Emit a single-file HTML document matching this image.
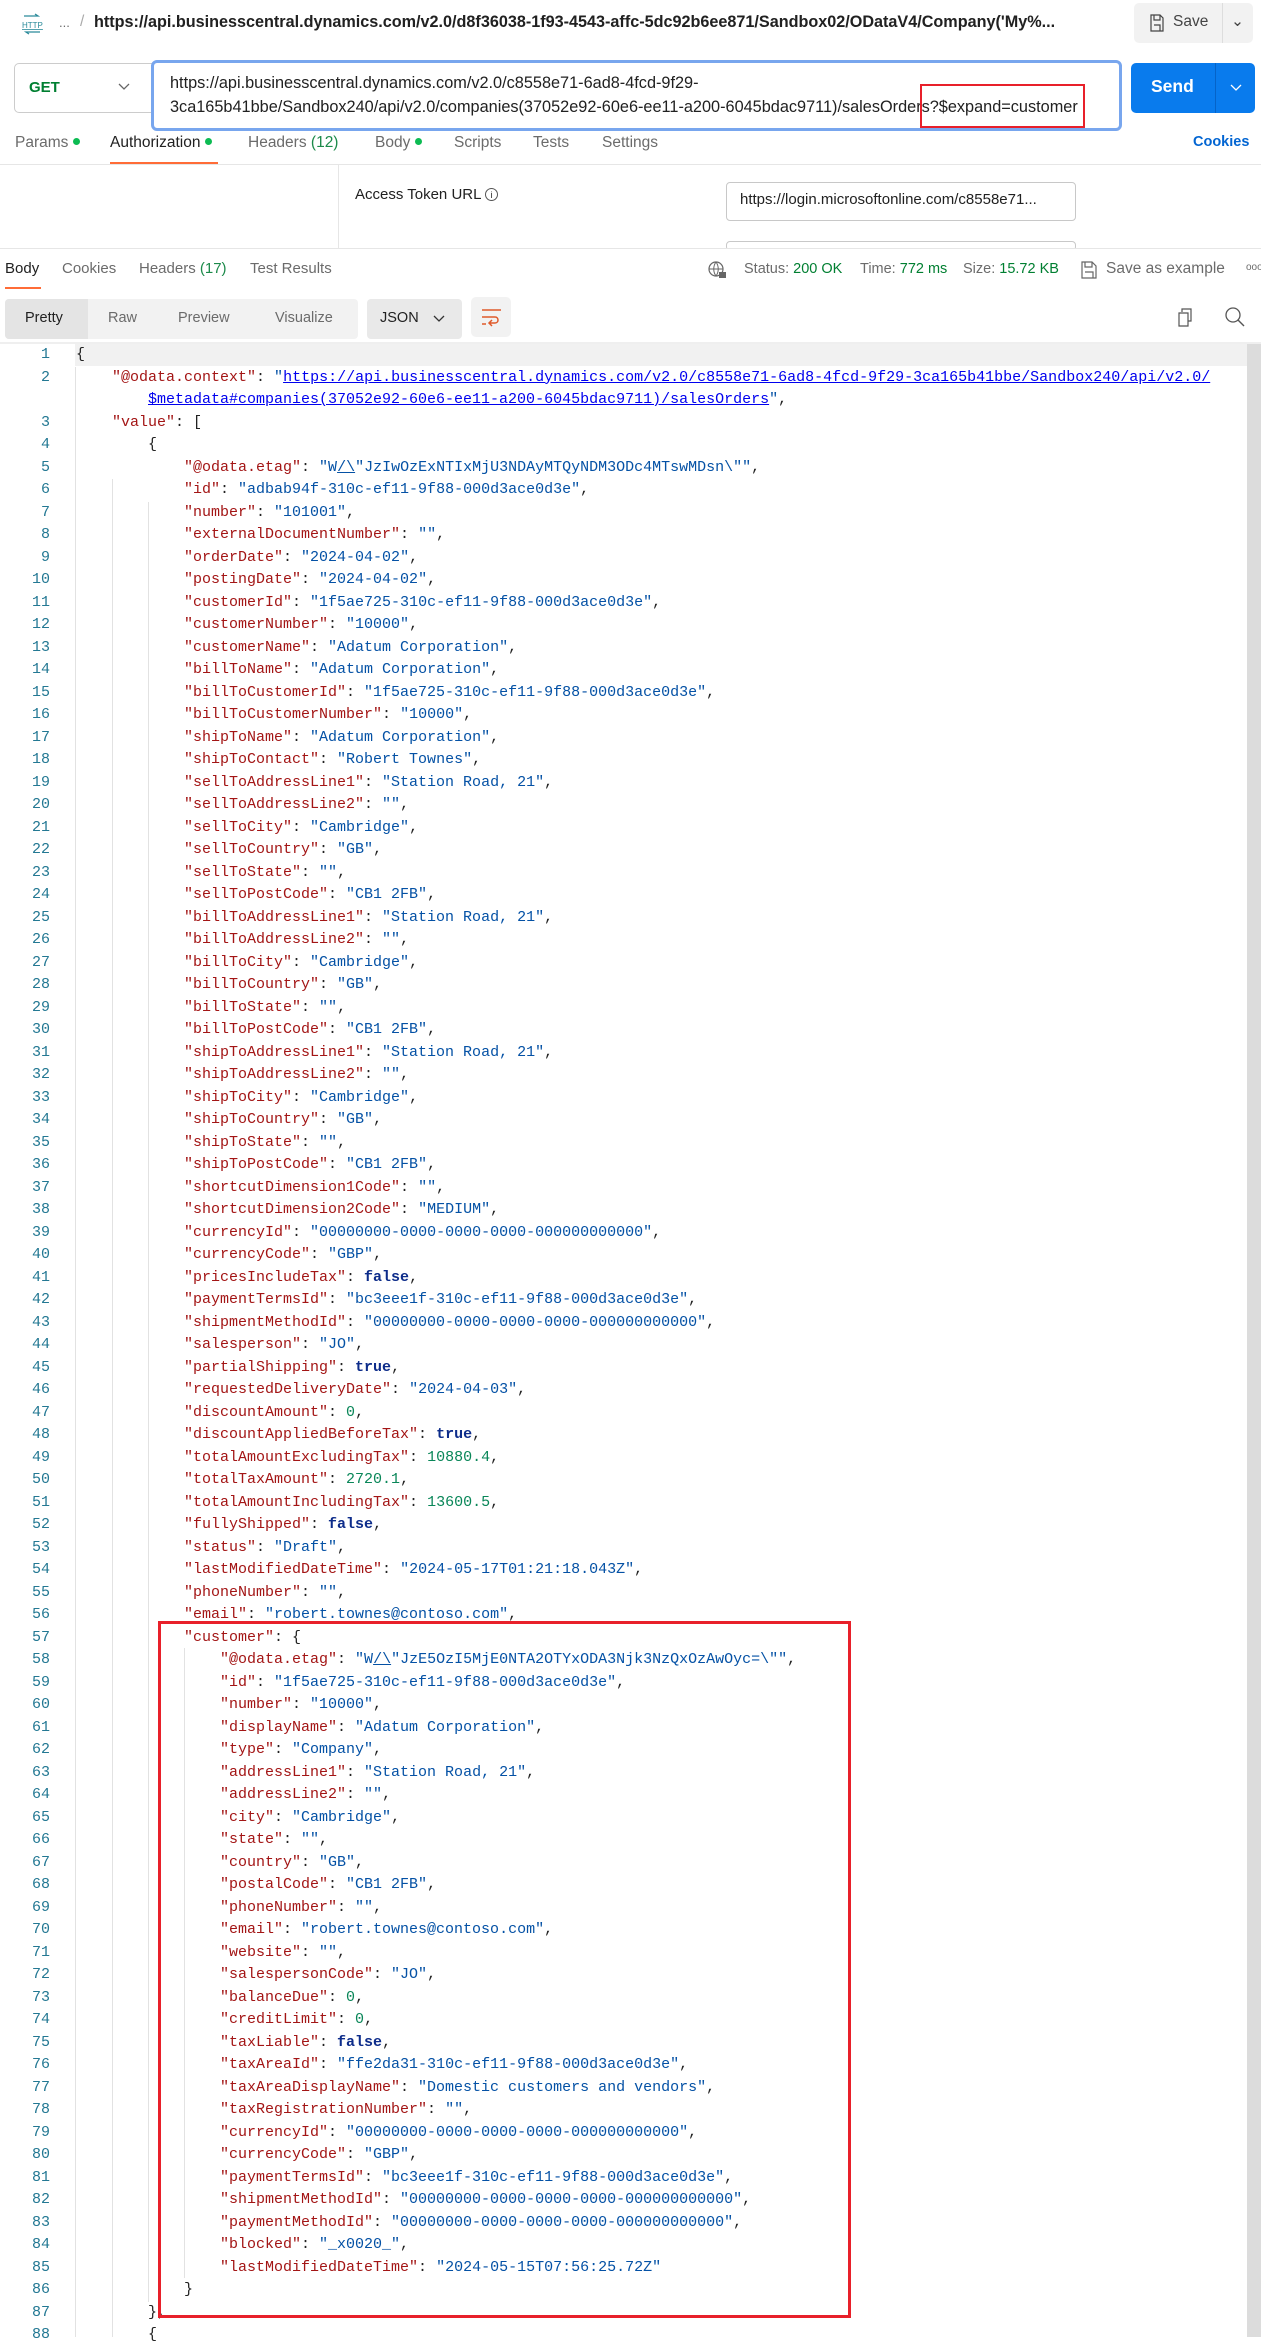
<!DOCTYPE html>
<html><head><meta charset="utf-8"><style>
*{margin:0;padding:0;box-sizing:border-box}
body{width:1261px;height:2337px;background:#fff;position:relative;overflow:hidden;font-family:"Liberation Sans",sans-serif;color:#212121}
.a{position:absolute}
.t{font-size:15.5px;white-space:nowrap}
.g{color:#6b6b6b}
.dot{display:inline-block;width:7px;height:7px;border-radius:50%;background:#0cbb52;margin-left:5px;vertical-align:2px}
#code{position:absolute;left:0;top:344px;width:1247px;font-family:"Liberation Mono",monospace;font-size:15px}
#code div{height:22.5px;line-height:22.5px;white-space:pre;position:relative;color:#222}
#code div i{position:absolute;left:0;width:50px;text-align:right;font-style:normal;color:#237893}
.c0{padding-left:76px}.c1{padding-left:112px}.c2{padding-left:148px}.c3{padding-left:184px}.c4{padding-left:220px}
.k{color:#a31515}.s{color:#0451a5}.n{color:#098658}.b{color:#0d2c8a;font-weight:bold}
.u{color:#0000ee;text-decoration:underline}
.vl{position:absolute;width:1px;background:#e2e2e2}
</style></head><body>

<!-- top bar -->
<svg class="a" style="left:20px;top:13px" width="24" height="22" viewBox="0 0 24 22"><path d="M4 3h14l-3-2M20 19H6l3 2" stroke="#2a8a9a" stroke-width="1.3" fill="none"/><text x="2" y="15" font-size="8" font-family="Liberation Sans" fill="#2a8a9a" text-decoration="underline">HTTP</text></svg>
<div class="a t g" style="left:59px;top:15px;font-size:13px">...</div>
<div class="a t" style="left:80px;top:13px;color:#aaa">/</div>
<div class="a t" style="left:94px;top:13px;font-weight:bold;font-size:16.2px">https://api.businesscentral.dynamics.com/v2.0/d8f36038-1f93-4543-affc-5dc92b6ee871/Sandbox02/ODataV4/Company('My%...</div>
<div class="a" style="left:1134px;top:3px;width:119px;height:40px;background:#f2f2f2;border-radius:5px"></div>
<div class="a" style="left:1222px;top:3px;width:1px;height:40px;background:#ddd"></div>
<svg class="a" style="left:1150px;top:14px" width="14" height="18" viewBox="0 0 14 18"><path d="M1 1h9l3 3v13H1z M4 1v5h6V1 M4 11h6v6" stroke="#444" stroke-width="1.2" fill="none"/></svg>
<div class="a t" style="left:1173px;top:13px;color:#444">Save</div>
<div class="a t" style="left:1231px;top:12px;color:#444">&#8964;</div>

<!-- request row -->
<div class="a" style="left:14px;top:63px;width:140px;height:50px;border:1px solid #ccc;border-radius:5px 0 0 5px"></div>
<div class="a t" style="left:29px;top:79px;color:#007f31;font-weight:bold;font-size:15px">GET</div>
<svg class="a" style="left:118px;top:83px" width="12" height="8"><path d="M1 1l5 5 5-5" stroke="#666" fill="none" stroke-width="1.3"/></svg>
<div class="a" style="left:151px;top:60px;width:971px;height:71px;border:3px solid #78a6ee;border-radius:6px;background:#fff"></div>
<div class="a t" style="left:170px;top:74px;font-size:16.3px">https://api.businesscentral.dynamics.com/v2.0/c8558e71-6ad8-4fcd-9f29-</div>
<div class="a t" style="left:170px;top:98px;font-size:16.3px">3ca165b41bbe/Sandbox240/api/v2.0/companies(37052e92-60e6-ee11-a200-6045bdac9711)/salesOrders?$expand=customer</div>
<div class="a" style="left:920px;top:84px;width:165px;height:44px;border:2px solid #e8202a"></div>
<div class="a" style="left:1131px;top:63px;width:124px;height:50px;background:#097bed;border-radius:5px"></div>
<div class="a" style="left:1215px;top:63px;width:1px;height:50px;background:#0563c8"></div>
<div class="a t" style="left:1151px;top:76px;color:#fff;font-weight:bold;font-size:17.5px">Send</div>
<svg class="a" style="left:1230px;top:84px" width="12" height="8"><path d="M1 1l5 5 5-5" stroke="#fff" fill="none" stroke-width="1.3"/></svg>

<!-- tabs -->
<div class="a t g" style="left:15px;top:134px">Params<span class="dot"></span></div>
<div class="a t" style="left:110px;top:134px">Authorization<span class="dot"></span></div>
<div class="a t g" style="left:248px;top:134px">Headers <span style="color:#1c8a4a">(12)</span></div>
<div class="a t g" style="left:375px;top:134px">Body<span class="dot"></span></div>
<div class="a t g" style="left:454px;top:134px">Scripts</div>
<div class="a t g" style="left:533px;top:134px">Tests</div>
<div class="a t g" style="left:602px;top:134px">Settings</div>
<div class="a t" style="left:1193px;top:134px;color:#0265d2;font-weight:bold;font-size:14.5px">Cookies</div>
<div class="a" style="left:110px;top:162px;width:108px;height:2px;background:#ff6c37"></div>
<div class="a" style="left:0;top:164px;width:1261px;height:1px;background:#e6e6e6"></div>

<!-- auth panel -->
<div class="a" style="left:338px;top:165px;width:1px;height:83px;background:#e6e6e6"></div>
<div class="a t" style="left:355px;top:186px;font-size:15px">Access Token URL <span style="display:inline-block;width:13px;height:13px;border:1px solid #555;border-radius:50%;font-size:9px;text-align:center;line-height:12px;vertical-align:1px">i</span></div>
<div class="a" style="left:726px;top:182px;width:350px;height:39px;border:1px solid #c8c8c8;border-radius:4px"></div>
<div class="a t" style="left:740px;top:191px;font-size:15px">https://login.microsoftonline.com/c8558e71...</div>
<div class="a" style="left:726px;top:241px;width:350px;height:10px;border:1px solid #c8c8c8;border-radius:4px"></div>
<div class="a" style="left:0;top:248px;width:1261px;height:1px;background:#e6e6e6"></div>
<div class="a" style="left:0;top:249px;width:1261px;height:40px;background:#fff"></div>

<!-- response tabs -->
<div class="a t" style="left:5px;top:260px;font-size:15px">Body</div>
<div class="a t g" style="left:62px;top:260px;font-size:15px">Cookies</div>
<div class="a t g" style="left:139px;top:260px;font-size:15px">Headers <span style="color:#1c8a4a">(17)</span></div>
<div class="a t g" style="left:250px;top:260px;font-size:15px">Test Results</div>
<div class="a" style="left:5px;top:287px;width:36px;height:2px;background:#ff6c37"></div>
<svg class="a" style="left:708px;top:260px" width="20" height="20" viewBox="0 0 20 20"><circle cx="8" cy="9" r="7" stroke="#666" fill="none" stroke-width="1.2"/><path d="M1 9h14M8 2c-3 4-3 10 0 14M8 2c3 4 3 10 0 14" stroke="#666" fill="none"/><rect x="11" y="12" width="7" height="6" fill="#666"/></svg>
<div class="a t g" style="left:744px;top:261px;font-size:14.5px">Status: <span style="color:#007f31">200 OK</span></div>
<div class="a t g" style="left:860px;top:261px;font-size:14.5px">Time: <span style="color:#007f31">772 ms</span></div>
<div class="a t g" style="left:963px;top:261px;font-size:14.5px">Size: <span style="color:#007f31">15.72 KB</span></div>
<svg class="a" style="left:1081px;top:261px" width="16" height="18" viewBox="0 0 16 18"><path d="M1 1h10l4 4v12H1z M4 1v5h7V1 M4 11h8v6" stroke="#666" stroke-width="1.2" fill="none"/></svg>
<div class="a t g" style="left:1106px;top:260px;font-size:15.5px">Save as example</div>
<div class="a t g" style="left:1246px;top:262px;font-size:10px">ooo</div>

<!-- toolbar -->
<div class="a" style="left:5px;top:299px;width:353px;height:40px;background:#f2f2f2;border-radius:4px"></div>
<div class="a" style="left:5px;top:299px;width:83px;height:40px;background:#e4e4e4;border-radius:4px 0 0 4px"></div>
<div class="a t" style="left:25px;top:310px;font-size:14.5px">Pretty</div>
<div class="a t g" style="left:108px;top:310px;font-size:14.5px">Raw</div>
<div class="a t g" style="left:178px;top:310px;font-size:14.5px">Preview</div>
<div class="a t g" style="left:275px;top:310px;font-size:14.5px">Visualize</div>
<div class="a" style="left:367px;top:299px;width:95px;height:40px;background:#e9e9e9;border-radius:4px"></div>
<div class="a t" style="left:380px;top:310px;font-size:14.5px">JSON</div>
<svg class="a" style="left:433px;top:315px" width="12" height="8"><path d="M1 1l5 5 5-5" stroke="#333" fill="none" stroke-width="1.3"/></svg>
<div class="a" style="left:471px;top:297px;width:40px;height:40px;background:#f2f2f2;border-radius:5px"></div>
<svg class="a" style="left:481px;top:308px" width="22" height="20" viewBox="0 0 22 20"><path d="M1 2h19M1 9h13c4 0 4 6 0 6h-5M11 12l-3 3 3 3M1 16h4" stroke="#e05a2a" stroke-width="1.5" fill="none"/></svg>
<svg class="a" style="left:1178px;top:308px" width="18" height="20" viewBox="0 0 18 20"><path d="M4 4V1h9v12h-3M1 5h9v13H1z" stroke="#555" stroke-width="1.2" fill="none"/></svg>
<svg class="a" style="left:1224px;top:306px" width="22" height="22" viewBox="0 0 22 22"><circle cx="9" cy="9" r="7" stroke="#555" stroke-width="1.3" fill="none"/><path d="M14 14l6 6" stroke="#555" stroke-width="1.4"/></svg>

<!-- code area -->
<div class="a" style="left:0;top:342px;width:1261px;height:2px;background:#efefef"></div>
<div class="a" style="left:1247px;top:344px;width:14px;height:1993px;background:#dcdcdc"></div>
<div class="a" style="left:75px;top:344px;width:1172px;height:22px;background:#f1f1f1"></div>
<div class="vl" style="left:75px;top:367px;height:1970px"></div>
<div class="vl" style="left:112px;top:479px;height:1858px"></div>
<div class="vl" style="left:148px;top:502px;height:1800px"></div>
<div class="vl" style="left:184px;top:1648px;height:630px"></div>

<div id="code">
<div class="c0"><i>1</i>{</div>
<div class="c1"><i>2</i><span class="k">"@odata.context"</span>: <span class="s">"</span><span class="u">https://api.businesscentral.dynamics.com/v2.0/c8558e71-6ad8-4fcd-9f29-3ca165b41bbe/Sandbox240/api/v2.0/</span></div>
<div class="c2"><span class="u">$metadata#companies(37052e92-60e6-ee11-a200-6045bdac9711)/salesOrders</span><span class="s">"</span>,</div>
<div class="c1"><i>3</i><span class="k">"value"</span>: [</div>
<div class="c2"><i>4</i>{</div>
<div class="c3"><i>5</i><span class="k">"@odata.etag"</span>: <span class="s">"W<u>/\</u>"JzIwOzExNTIxMjU3NDAyMTQyNDM3ODc4MTswMDsn\""</span>,</div>
<div class="c3"><i>6</i><span class="k">"id"</span>: <span class="s">"adbab94f-310c-ef11-9f88-000d3ace0d3e"</span>,</div>
<div class="c3"><i>7</i><span class="k">"number"</span>: <span class="s">"101001"</span>,</div>
<div class="c3"><i>8</i><span class="k">"externalDocumentNumber"</span>: <span class="s">""</span>,</div>
<div class="c3"><i>9</i><span class="k">"orderDate"</span>: <span class="s">"2024-04-02"</span>,</div>
<div class="c3"><i>10</i><span class="k">"postingDate"</span>: <span class="s">"2024-04-02"</span>,</div>
<div class="c3"><i>11</i><span class="k">"customerId"</span>: <span class="s">"1f5ae725-310c-ef11-9f88-000d3ace0d3e"</span>,</div>
<div class="c3"><i>12</i><span class="k">"customerNumber"</span>: <span class="s">"10000"</span>,</div>
<div class="c3"><i>13</i><span class="k">"customerName"</span>: <span class="s">"Adatum Corporation"</span>,</div>
<div class="c3"><i>14</i><span class="k">"billToName"</span>: <span class="s">"Adatum Corporation"</span>,</div>
<div class="c3"><i>15</i><span class="k">"billToCustomerId"</span>: <span class="s">"1f5ae725-310c-ef11-9f88-000d3ace0d3e"</span>,</div>
<div class="c3"><i>16</i><span class="k">"billToCustomerNumber"</span>: <span class="s">"10000"</span>,</div>
<div class="c3"><i>17</i><span class="k">"shipToName"</span>: <span class="s">"Adatum Corporation"</span>,</div>
<div class="c3"><i>18</i><span class="k">"shipToContact"</span>: <span class="s">"Robert Townes"</span>,</div>
<div class="c3"><i>19</i><span class="k">"sellToAddressLine1"</span>: <span class="s">"Station Road, 21"</span>,</div>
<div class="c3"><i>20</i><span class="k">"sellToAddressLine2"</span>: <span class="s">""</span>,</div>
<div class="c3"><i>21</i><span class="k">"sellToCity"</span>: <span class="s">"Cambridge"</span>,</div>
<div class="c3"><i>22</i><span class="k">"sellToCountry"</span>: <span class="s">"GB"</span>,</div>
<div class="c3"><i>23</i><span class="k">"sellToState"</span>: <span class="s">""</span>,</div>
<div class="c3"><i>24</i><span class="k">"sellToPostCode"</span>: <span class="s">"CB1 2FB"</span>,</div>
<div class="c3"><i>25</i><span class="k">"billToAddressLine1"</span>: <span class="s">"Station Road, 21"</span>,</div>
<div class="c3"><i>26</i><span class="k">"billToAddressLine2"</span>: <span class="s">""</span>,</div>
<div class="c3"><i>27</i><span class="k">"billToCity"</span>: <span class="s">"Cambridge"</span>,</div>
<div class="c3"><i>28</i><span class="k">"billToCountry"</span>: <span class="s">"GB"</span>,</div>
<div class="c3"><i>29</i><span class="k">"billToState"</span>: <span class="s">""</span>,</div>
<div class="c3"><i>30</i><span class="k">"billToPostCode"</span>: <span class="s">"CB1 2FB"</span>,</div>
<div class="c3"><i>31</i><span class="k">"shipToAddressLine1"</span>: <span class="s">"Station Road, 21"</span>,</div>
<div class="c3"><i>32</i><span class="k">"shipToAddressLine2"</span>: <span class="s">""</span>,</div>
<div class="c3"><i>33</i><span class="k">"shipToCity"</span>: <span class="s">"Cambridge"</span>,</div>
<div class="c3"><i>34</i><span class="k">"shipToCountry"</span>: <span class="s">"GB"</span>,</div>
<div class="c3"><i>35</i><span class="k">"shipToState"</span>: <span class="s">""</span>,</div>
<div class="c3"><i>36</i><span class="k">"shipToPostCode"</span>: <span class="s">"CB1 2FB"</span>,</div>
<div class="c3"><i>37</i><span class="k">"shortcutDimension1Code"</span>: <span class="s">""</span>,</div>
<div class="c3"><i>38</i><span class="k">"shortcutDimension2Code"</span>: <span class="s">"MEDIUM"</span>,</div>
<div class="c3"><i>39</i><span class="k">"currencyId"</span>: <span class="s">"00000000-0000-0000-0000-000000000000"</span>,</div>
<div class="c3"><i>40</i><span class="k">"currencyCode"</span>: <span class="s">"GBP"</span>,</div>
<div class="c3"><i>41</i><span class="k">"pricesIncludeTax"</span>: <span class="b">false</span>,</div>
<div class="c3"><i>42</i><span class="k">"paymentTermsId"</span>: <span class="s">"bc3eee1f-310c-ef11-9f88-000d3ace0d3e"</span>,</div>
<div class="c3"><i>43</i><span class="k">"shipmentMethodId"</span>: <span class="s">"00000000-0000-0000-0000-000000000000"</span>,</div>
<div class="c3"><i>44</i><span class="k">"salesperson"</span>: <span class="s">"JO"</span>,</div>
<div class="c3"><i>45</i><span class="k">"partialShipping"</span>: <span class="b">true</span>,</div>
<div class="c3"><i>46</i><span class="k">"requestedDeliveryDate"</span>: <span class="s">"2024-04-03"</span>,</div>
<div class="c3"><i>47</i><span class="k">"discountAmount"</span>: <span class="n">0</span>,</div>
<div class="c3"><i>48</i><span class="k">"discountAppliedBeforeTax"</span>: <span class="b">true</span>,</div>
<div class="c3"><i>49</i><span class="k">"totalAmountExcludingTax"</span>: <span class="n">10880.4</span>,</div>
<div class="c3"><i>50</i><span class="k">"totalTaxAmount"</span>: <span class="n">2720.1</span>,</div>
<div class="c3"><i>51</i><span class="k">"totalAmountIncludingTax"</span>: <span class="n">13600.5</span>,</div>
<div class="c3"><i>52</i><span class="k">"fullyShipped"</span>: <span class="b">false</span>,</div>
<div class="c3"><i>53</i><span class="k">"status"</span>: <span class="s">"Draft"</span>,</div>
<div class="c3"><i>54</i><span class="k">"lastModifiedDateTime"</span>: <span class="s">"2024-05-17T01:21:18.043Z"</span>,</div>
<div class="c3"><i>55</i><span class="k">"phoneNumber"</span>: <span class="s">""</span>,</div>
<div class="c3"><i>56</i><span class="k">"email"</span>: <span class="s">"robert.townes@contoso.com"</span>,</div>
<div class="c3"><i>57</i><span class="k">"customer"</span>: {</div>
<div class="c4"><i>58</i><span class="k">"@odata.etag"</span>: <span class="s">"W<u>/\</u>"JzE5OzI5MjE0NTA2OTYxODA3Njk3NzQxOzAwOyc=\""</span>,</div>
<div class="c4"><i>59</i><span class="k">"id"</span>: <span class="s">"1f5ae725-310c-ef11-9f88-000d3ace0d3e"</span>,</div>
<div class="c4"><i>60</i><span class="k">"number"</span>: <span class="s">"10000"</span>,</div>
<div class="c4"><i>61</i><span class="k">"displayName"</span>: <span class="s">"Adatum Corporation"</span>,</div>
<div class="c4"><i>62</i><span class="k">"type"</span>: <span class="s">"Company"</span>,</div>
<div class="c4"><i>63</i><span class="k">"addressLine1"</span>: <span class="s">"Station Road, 21"</span>,</div>
<div class="c4"><i>64</i><span class="k">"addressLine2"</span>: <span class="s">""</span>,</div>
<div class="c4"><i>65</i><span class="k">"city"</span>: <span class="s">"Cambridge"</span>,</div>
<div class="c4"><i>66</i><span class="k">"state"</span>: <span class="s">""</span>,</div>
<div class="c4"><i>67</i><span class="k">"country"</span>: <span class="s">"GB"</span>,</div>
<div class="c4"><i>68</i><span class="k">"postalCode"</span>: <span class="s">"CB1 2FB"</span>,</div>
<div class="c4"><i>69</i><span class="k">"phoneNumber"</span>: <span class="s">""</span>,</div>
<div class="c4"><i>70</i><span class="k">"email"</span>: <span class="s">"robert.townes@contoso.com"</span>,</div>
<div class="c4"><i>71</i><span class="k">"website"</span>: <span class="s">""</span>,</div>
<div class="c4"><i>72</i><span class="k">"salespersonCode"</span>: <span class="s">"JO"</span>,</div>
<div class="c4"><i>73</i><span class="k">"balanceDue"</span>: <span class="n">0</span>,</div>
<div class="c4"><i>74</i><span class="k">"creditLimit"</span>: <span class="n">0</span>,</div>
<div class="c4"><i>75</i><span class="k">"taxLiable"</span>: <span class="b">false</span>,</div>
<div class="c4"><i>76</i><span class="k">"taxAreaId"</span>: <span class="s">"ffe2da31-310c-ef11-9f88-000d3ace0d3e"</span>,</div>
<div class="c4"><i>77</i><span class="k">"taxAreaDisplayName"</span>: <span class="s">"Domestic customers and vendors"</span>,</div>
<div class="c4"><i>78</i><span class="k">"taxRegistrationNumber"</span>: <span class="s">""</span>,</div>
<div class="c4"><i>79</i><span class="k">"currencyId"</span>: <span class="s">"00000000-0000-0000-0000-000000000000"</span>,</div>
<div class="c4"><i>80</i><span class="k">"currencyCode"</span>: <span class="s">"GBP"</span>,</div>
<div class="c4"><i>81</i><span class="k">"paymentTermsId"</span>: <span class="s">"bc3eee1f-310c-ef11-9f88-000d3ace0d3e"</span>,</div>
<div class="c4"><i>82</i><span class="k">"shipmentMethodId"</span>: <span class="s">"00000000-0000-0000-0000-000000000000"</span>,</div>
<div class="c4"><i>83</i><span class="k">"paymentMethodId"</span>: <span class="s">"00000000-0000-0000-0000-000000000000"</span>,</div>
<div class="c4"><i>84</i><span class="k">"blocked"</span>: <span class="s">"_x0020_"</span>,</div>
<div class="c4"><i>85</i><span class="k">"lastModifiedDateTime"</span>: <span class="s">"2024-05-15T07:56:25.72Z"</span></div>
<div class="c3"><i>86</i>}</div>
<div class="c2"><i>87</i>},</div>
<div class="c2"><i>88</i>{</div>
</div>
<div class="a" style="left:158px;top:1621px;width:693px;height:697px;border:3px solid #e8202a"></div>
</body></html>
